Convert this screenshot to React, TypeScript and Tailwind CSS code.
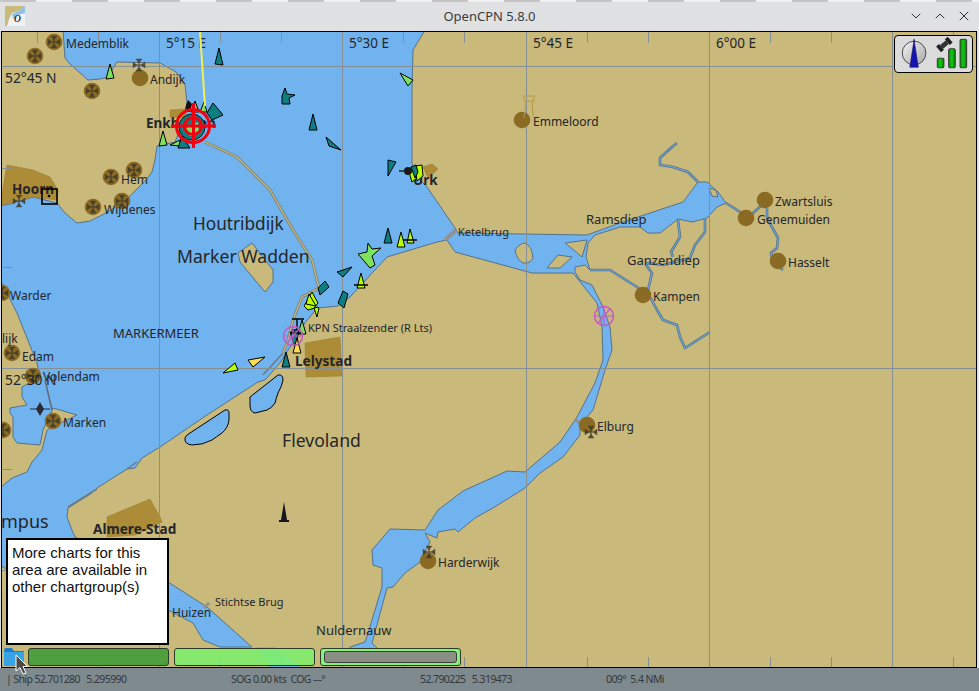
import React from 'react';
import { ChevronDown, ChevronUp, X } from 'lucide-react';

const WATER = '#70b3ef';
const LAND = '#c9b97b';
const COAST = '#56728a';
const TOWN = '#ad8c37';
const DOT = '#8b6a23';

// main water outline, walked round from the top left of the chart
const waterOutline =
  '63,30 65,58 70,64 88,80 100,79 108,77 112,70 117,62 160,63 176,72 185,84 187,103 185,112 180,130 175,142 157,146 155,160 152,172 146,180 128,198 108,212 90,221 77,223 65,213 57,203 33,197 10,204 0,206 ' +
  '0,279 2,283 17,313 37,363 40,377 22,387 22,397 27,405 10,408 10,413 13,417 13,437 17,443 40,445 43,430 53,408 77,415 47,430 42,450 32,462 27,472 12,478 0,488 ' +
  '0,565 40,590 168,610 193,623 203,640 220,647 252,647 207,607 168,582 75,537 72,530 67,517 68,508 92,493 97,488 127,469 135,468 142,458 160,447 207,415 258,382 265,380 280,363 305,323 317,308 338,306 350,297 387,257 437,242 447,240 455,252 532,273 573,273 ' +
  '597,303 602,327 603,360 595,383 577,417 573,423 560,442 525,472 507,471 463,491 438,510 425,530 390,529 372,550 373,565 382,568 382,587 368,633 365,642 350,647 350,649 378,649 372,643 387,588 393,587 405,573 420,562 430,542 425,533 437,538 438,532 455,529 458,532 475,518 493,508 525,488 540,473 563,457 580,435 580,425 593,410 605,370 612,350 610,327 603,307 592,285 580,280 575,272 ' +
  '575,267 585,265 590,270 586,257 588,243 595,235 620,227 640,227 648,233 660,233 678,219 692,222 707,218 717,207 726,203 718,192 707,182 698,182 683,202 620,223 587,235 458,233 455,228 427,187 418,178 412,163 412,90 413,50 425,30';

const islands = [
  '547,268 558,255 572,257 560,268',
  '565,243 587,240 582,257 575,251',
  '238,253 252,243 273,270 273,282 265,292 240,262',
  '709,188 716,190 718,197 712,196',
];

const lakes = [
  'M185 438Q186 435 190 433L225 410Q229 409 229 413L229 420Q228 428 222 433Q216 437 212 440Q203 445 192 445Q184 444 185 438Z',
  'M250 397L278 375Q283 374 283 380Q282 386 278 393Q276 399 275 403Q272 408 267 410L255 413Q250 412 250 405Z',
];

const towns = [
  '0,205 7,165 33,170 50,177 58,190 57,200 33,197 10,203',
  '305,343 340,337 342,376 306,377',
  '107,517 150,499 160,517 162,522 135,535 107,537',
  '170,110 187,109 185,118 170,117',
  '423,167 432,164 438,169 428,178',
];

const streams = [
  '677,143 672,147 660,158 660,165 673,167 688,172 698,182',
  '726,203 737,210 747,217',
  '752,214 765,202',
  '767,208 767,218 778,238 777,248 771,253 773,263 783,270',
  '678,220 680,237 671,252 673,257',
  '705,218 705,232 695,245 690,258 663,265 648,263 646,265 652,273 648,290',
  '590,270 610,270 637,287 650,297 657,310 663,320 677,325 680,337 685,348 710,332',
];

const labels = [
  { t: 'Medemblik', x: 66, y: 48, s: 12 },
  { t: '5°15 E', x: 166, y: 48, s: 13.5 },
  { t: '5°30 E', x: 349, y: 48, s: 13.5 },
  { t: '5°45 E', x: 533, y: 48, s: 13.5 },
  { t: '6°00 E', x: 716, y: 48, s: 13.5 },
  { t: '52°45 N', x: 5, y: 83, s: 13.8 },
  { t: '52°30 N', x: 5, y: 385, s: 13.8 },
  { t: 'Andijk', x: 150, y: 84, s: 12 },
  { t: 'Emmeloord', x: 533, y: 126, s: 12 },
  { t: 'Enkhuizen', x: 146, y: 128, s: 13.5, b: true },
  { t: 'Urk', x: 413, y: 185, s: 13.5, b: true },
  { t: 'Hoorn', x: 12, y: 194, s: 13.5, b: true },
  { t: 'Hem', x: 121, y: 184, s: 12 },
  { t: 'Wijdenes', x: 104, y: 214, s: 12 },
  { t: 'Houtribdijk', x: 193, y: 230, s: 17.2 },
  { t: 'Marker Wadden', x: 177, y: 263, s: 17.6 },
  { t: 'Ketelbrug', x: 458, y: 236, s: 11 },
  { t: 'Ramsdiep', x: 586, y: 224, s: 13 },
  { t: 'Ganzendiep', x: 627, y: 265, s: 13 },
  { t: 'Zwartsluis', x: 775, y: 206, s: 12 },
  { t: 'Genemuiden', x: 757, y: 224, s: 12 },
  { t: 'Hasselt', x: 788, y: 267, s: 12 },
  { t: 'Kampen', x: 653, y: 301, s: 12 },
  { t: 'Warder', x: 10, y: 300, s: 12 },
  { t: 'lijk', x: 2, y: 343, s: 12 },
  { t: 'Edam', x: 22, y: 361, s: 12 },
  { t: 'Volendam', x: 43, y: 381, s: 12 },
  { t: 'Marken', x: 63, y: 427, s: 12 },
  { t: 'MARKERMEER', x: 113, y: 338, s: 13 },
  { t: 'KPN Straalzender (R Lts)', x: 308, y: 332, s: 11 },
  { t: 'Lelystad', x: 295, y: 366, s: 13.6, b: true },
  { t: 'Flevoland', x: 282, y: 447, s: 17.6 },
  { t: 'Elburg', x: 597, y: 431, s: 12 },
  { t: 'Harderwijk', x: 438, y: 567, s: 12 },
  { t: 'Nuldernauw', x: 316, y: 635, s: 13 },
  { t: 'Stichtse Brug', x: 215, y: 606, s: 11 },
  { t: 'Huizen', x: 172, y: 617, s: 12 },
  { t: 'Almere-Stad', x: 93, y: 534, s: 13.6, b: true },
  { t: 'mpus', x: 1, y: 528, s: 18 },
];

const churchTowns = [
  [54, 42], [35, 56], [92, 91], [111, 177], [134, 170], [122, 201], [93, 207], [2, 293], [12, 353], [33, 376], [53, 421], [3, 430],
];
const plainTowns = [
  [140, 78], [522, 120], [765, 200], [746, 218], [778, 261], [643, 295], [587, 425], [428, 561],
];
const looseCrosses = [
  [19, 201], [139, 65], [591, 432], [429, 552],
];

const TEAL = '#0d7f82';
const GREEN = '#7de35f';
const LIME = '#b8ff00';
const YELLOW = '#ffdc55';

const ships = [
  { p: '219,48 215,64 223,65', f: TEAL },
  { p: '285,88 287,94 295,95 289,98 290,104 282,104 282,96', f: TEAL },
  { p: '313,114 309,130 317,130', f: TEAL },
  { p: '326,137 341,150 329,146', f: TEAL },
  { p: '388,160 396,162 388,176', f: TEAL },
  { p: '400,73 413,80 408,86', f: GREEN },
  { p: '110,64 106,79 114,78', f: GREEN },
  { p: '163,131 159,146 167,145', f: GREEN },
  { p: '388,228 384,243 392,243', f: TEAL },
  { p: '401,232 397,247 405,247', f: LIME },
  { p: '410,229 407,243 414,243', f: LIME },
  { p: '368,243 372,249 381,248 372,256 375,265 370,268 358,254 367,252', f: GREEN },
  { p: '361,273 357,288 365,288', f: LIME },
  { p: '337,272 352,267 343,277', f: TEAL },
  { p: '325,281 329,287 320,295 318,288', f: TEAL },
  { p: '343,291 348,294 344,308 338,303', f: TEAL },
  { p: '312,292 304,306 308,310 318,307 319,308 317,317 314,308 318,303', f: LIME },
  { p: '309,294 306,304 316,306', f: LIME },
  { p: '302,320 298,334 306,334', f: GREEN },
  { p: '290,332 299,332 295,347', f: TEAL },
  { p: '297,338 293,353 301,353', f: YELLOW },
  { p: '286,352 282,367 290,367', f: TEAL },
  { p: '248,360 265,357 253,367', f: YELLOW },
  { p: '223,373 235,363 238,370', f: LIME },
  { p: '207,113 213,103 223,115 212,120', f: TEAL },
  { p: '204,102 200,112 207,112', f: GREEN },
  { p: '195,101 191,112 199,112', f: GREEN },
  { p: '170,145 180,140 180,146', f: GREEN },
  { p: '182,136 178,148 190,148', f: TEAL },
  { p: '408,169 412,182 418,177 414,167', f: LIME },
  { p: '415,166 417,181 423,176 422,165', f: LIME },
  { p: '411,167 415,178 418,172 416,165', f: TEAL },
];

const Church = ({ x, y }: { x: number; y: number }) => (
  <g transform={`translate(${x} ${y})`} stroke="#3d3a2c" fill="#3d3a2c" opacity="0.85">
    <path d="M-6 0H6M0 -6V6" strokeWidth="1.2" />
    <path d="M-6 -3V3L-2 0ZM6 -3V3L2 0ZM-3 -6H3L0 -2ZM-3 6H3L0 2Z" strokeWidth="0.4" />
  </g>
);

const ChartMap = () => (
  <svg viewBox="2 32 974 635" width="974" height="635" className="block">
    <rect x="2" y="32" width="974" height="635" fill={LAND} />

    {/* water and shoreline */}
    <polygon points={waterOutline} fill={WATER} stroke={COAST} strokeWidth="1" />
    <polygon points="256,647 275,647 300,667 270,667" fill={WATER} />
    {islands.map((p) => (
      <polygon key={p} points={p} fill={LAND} stroke={COAST} strokeWidth="1" strokeLinejoin="round" />
    ))}
    <path d="M515 250Q520 243 525 243Q532 246 533 258Q530 264 523 263Q517 260 515 250Z" fill={LAND} stroke={COAST} strokeWidth="1" />
    {lakes.map((d) => (
      <path key={d} d={d} fill={WATER} stroke="#000" strokeWidth="1" strokeLinejoin="round" />
    ))}
    {streams.map((p) => (
      <g key={p} fill="none" strokeLinejoin="round">
        <polyline points={p} stroke={COAST} strokeWidth="2.6" />
        <polyline points={p} stroke={WATER} strokeWidth="0.9" />
      </g>
    ))}
    {towns.map((p) => (
      <polygon key={p} points={p} fill={TOWN} stroke="#9a8035" strokeWidth="0.6" />
    ))}

    {/* dikes and bridges */}
    <g fill="none" strokeLinejoin="round">
      <polyline points="205,142 237,157 270,190 293,230 312,260 319,288 302,297 293,320 288,340 283,353" stroke="#7d8378" strokeWidth="3" />
      <polyline points="205,142 237,157 270,190 293,230 312,260 319,288 302,297 293,320 288,340 283,353" stroke={LAND} strokeWidth="1.2" />
      <polyline points="283,353 263,375" stroke="#6d7a84" strokeWidth="1.5" />
      <polyline points="45,380 52,410" stroke="#5f6b74" strokeWidth="1.5" />
      <polyline points="68,507 97,489" stroke="#6d7a84" strokeWidth="1.5" />
      <polyline points="127,469 137,462" stroke="#6d7a84" strokeWidth="1.5" />
      <polyline points="445,240 456,230" stroke="#929292" strokeWidth="4" />
      <polyline points="204,608 209,603" stroke="#929292" strokeWidth="3" />
      <polyline points="575,419 579,423" stroke="#929292" strokeWidth="3" />
    </g>

    {/* grid */}
    <g stroke="#868f93" strokeWidth="1">
      {[159, 342, 526, 709, 892].map((x) => (
        <line key={x} x1={x + 0.5} y1="32" x2={x + 0.5} y2="667" />
      ))}
      {[66, 368].map((y) => (
        <line key={y} x1="2" y1={y + 0.5} x2="976" y2={y + 0.5} />
      ))}
      {[37, 98, 220, 281, 403, 464, 587, 648, 770, 831, 953].map((x) => (
        <g key={x}>
          <line x1={x + 0.5} y1="32" x2={x + 0.5} y2="43" />
          <line x1={x + 0.5} y1="657" x2={x + 0.5} y2="667" />
        </g>
      ))}
      {[168, 267, 469, 570].map((y) => (
        <line key={y} x1="2" y1={y + 0.5} x2="12" y2={y + 0.5} />
      ))}
    </g>

    {/* places */}
    {plainTowns.map(([x, y]) => (
      <circle key={`${x}-${y}`} cx={x} cy={y} r="8.3" fill={DOT} />
    ))}
    {churchTowns.map(([x, y]) => (
      <g key={`${x}-${y}`}>
        <circle cx={x} cy={y} r="8.3" fill={DOT} />
        <Church x={x} y={y} />
      </g>
    ))}
    {looseCrosses.map(([x, y]) => (
      <Church key={`${x}-${y}`} x={x} y={y} />
    ))}

    {/* Emmeloord water tower */}
    <g fill="none" stroke="#b89a45" strokeWidth="1">
      <rect x="524" y="96" width="10" height="5" />
      <path d="M526 101L524 118M532 101L533 117" />
    </g>

    <g className="font-['Noto_Sans',sans-serif]" fill="#24262a">
      {labels.map((l) => (
        <text key={l.t} x={l.x} y={l.y} fontSize={l.s} fontWeight={l.b ? 700 : 400}>
          {l.t}
        </text>
      ))}
    </g>

    {/* Hoorn marker, buoy, beacon, radio mast */}
    <rect x="42" y="189" width="15" height="15" fill="none" stroke="#000" strokeWidth="1.6" />
    <circle cx="49" cy="196" r="1.3" fill="#000" />
    <path d="M40 402L44 409L40 416L36 409Z" fill="#2b2b33" />
    <path d="M30 409H50" stroke="#2b2b33" strokeWidth="1" />
    <path d="M284 502L287 520H289V522H279V520H281Z" fill="#16161c" />
    <path d="M292 319H304M292 330H304M297 319V330" stroke="#000" strokeWidth="1.4" />

    {/* AIS targets */}
    <circle cx="192" cy="127" r="13" fill={TEAL} stroke="#000" strokeWidth="0.8" />
    <path d="M186 128L198 122L199 134L190 136Z" fill={GREEN} />
    {ships.map((s) => (
      <polygon key={s.p} points={s.p} fill={s.f} stroke="#000" strokeWidth="1" strokeLinejoin="round" />
    ))}
    <path d="M403 240H417M354 285H368M290 333H301" stroke="#000" strokeWidth="1.6" />
    <path d="M399 171H411" stroke="#1a1a1a" strokeWidth="1.4" />
    <circle cx="408" cy="171" r="4" fill="#1a1a1a" />
    <path d="M186 105L188 100L192 104L190 112L185 112Z" fill="#111" />

    {/* light sectors */}
    {[[293, 336], [604, 316]].map(([x, y]) => (
      <g key={x} fill="none" stroke="#c65ac9" strokeWidth="1.2">
        <circle cx={x} cy={y} r="9.5" strokeWidth="1.6" />
        <path d={`M${x - 9} ${y}H${x + 9}M${x} ${y - 9}V${y + 9}M${x - 6} ${y + 7}L${x + 6} ${y - 7}`} />
      </g>
    ))}

    {/* own ship */}
    <line x1="200" y1="32" x2="205" y2="106" stroke="#f3ef52" strokeWidth="2" />
    <g fill="none" stroke="#f5000f" strokeWidth="3">
      <circle cx="193" cy="126" r="16.5" />
      <circle cx="193" cy="126" r="8.5" />
      <path d="M171 126H216M193.500 103V148" />
    </g>
  </svg>
);

const StatusWidget = () => (
  <div className="absolute left-[892px] top-[3px] w-[79px] h-[38px] rounded-[4px] border border-black bg-[#dcdcdc]">
    <svg viewBox="0 0 79 38" width="77" height="36" className="block">
      <defs>
        <linearGradient id="dial" x1="0" y1="0" x2="1" y2="1">
          <stop offset="0" stopColor="#f2f2f2" />
          <stop offset="1" stopColor="#a8a8a8" />
        </linearGradient>
        <linearGradient id="bar" x1="0" y1="0" x2="1" y2="0">
          <stop offset="0" stopColor="#078f07" />
          <stop offset="0.5" stopColor="#12c812" />
          <stop offset="1" stopColor="#067a06" />
        </linearGradient>
      </defs>
      <circle cx="19" cy="18" r="12.5" fill="url(#dial)" stroke="#444" strokeWidth="1" />
      <path d="M19 3V6" stroke="#333" strokeWidth="1" />
      <path d="M19 4L23.500 33H14.500Z" fill="#1414b4" stroke="#101060" strokeWidth="0.6" />
      <g transform="rotate(-40 51 9)">
        <rect x="47" y="6.500" width="8" height="5" rx="1" fill="#333" />
        <rect x="43" y="5" width="4" height="8" fill="#222" />
        <rect x="55" y="5" width="4" height="8" fill="#222" />
      </g>
      <rect x="43.500" y="23.500" width="7" height="10" rx="1" fill="url(#bar)" stroke="#333" />
      <rect x="55.500" y="13.500" width="7" height="20" rx="1" fill="url(#bar)" stroke="#333" />
      <rect x="67.500" y="3.500" width="7" height="30" rx="1" fill="url(#bar)" stroke="#333" />
    </svg>
  </div>
);

const App: React.FC = () => {
  return (
    <div className="relative flex h-[691px] w-[979px] flex-col overflow-hidden bg-[#e2e3e5] font-['Noto_Sans',sans-serif]">
      {/* title bar */}
      <div className="h-[2px] bg-[repeating-linear-gradient(90deg,#c4c4c4_0_36px,#f1f1f1_36px_72px)]" />
      <div className="relative flex h-[29px] items-center justify-center rounded-t-[7px] bg-[#e0e1e3]">
        <svg viewBox="0 0 20 20" width="20" height="20" className="absolute left-[5px] top-[4px]">
          <rect width="20" height="20" fill="#eef2f5" />
          <polygon points="0,0 20,0 14,5 7,7 4,13 2,20 0,20" fill="#c9b97b" />
          <polygon points="20,0 20,7 13,9 8,13 7,8 14,5" fill="#8fbfe8" />
          <text x="9" y="16" fontSize="14" fontStyle="italic" fontFamily="Liberation Serif, serif" fill="#111">
            o
          </text>
        </svg>
        <span className="text-[13px] text-[#3a3d40]">OpenCPN 5.8.0</span>
        <div className="absolute right-[7px] top-[6px] flex gap-[8px] text-[#2e3134]">
          <ChevronDown size={16} strokeWidth={1.5} />
          <ChevronUp size={16} strokeWidth={1.5} />
          <X size={16} strokeWidth={1.5} />
        </div>
      </div>

      {/* chart canvas */}
      <div className="relative ml-px mr-[2px] h-[637px] border border-black">
        <ChartMap />
        <StatusWidget />

        <div className="absolute left-[4px] top-[506px] h-[107px] w-[163px] border-[2px] border-black bg-white px-[4px] py-[4px] font-['Liberation_Sans',sans-serif] text-[15px] leading-[17px] text-[#111]">
          More charts for this
          <br />
          area are available in
          <br />
          other chartgroup(s)
        </div>

        <div className="absolute left-[2px] top-[616px] flex items-start">
          <svg viewBox="0 0 20 18" width="20" height="18" className="mr-[4px]">
            <path d="M0 2Q0 0 2 0H8L10 3H20V18H0Z" fill="#1e7fc8" />
            <rect y="4" width="20" height="14" fill="#3aa3e6" />
          </svg>
          <div className="mr-[5px] h-[18px] w-[141px] rounded-[3px] border border-[#2c3a28] bg-[#4e9f3e]" />
          <div className="mr-[5px] h-[18px] w-[141px] rounded-[3px] border border-[#2c3a28] bg-[#7eee6c]/90" />
          <div className="flex h-[18px] w-[141px] items-center justify-center rounded-[3px] border border-[#2c3a28] bg-[#86f07a]">
            <div className="h-[12px] w-[133px] rounded-[3px] border border-[#3a3f3a] bg-[#8a8f86]" />
          </div>
        </div>
      </div>

      {/* status bar */}
      <div className="flex h-[23px] items-center bg-[#7f8a8f] pl-[6px] text-[10.500px] tracking-[-0.6px] text-[#33383b] whitespace-pre">
        <span className="w-[225px]">| Ship 52.701280   5.295990</span>
        <span className="w-[189px]">SOG 0.00 kts  COG ---°</span>
        <span className="w-[186px]">52.790225   5.319473</span>
        <span>009°  5.4 NMi</span>
      </div>

      {/* pointer */}
      <svg viewBox="0 0 13 22" width="13" height="22" className="absolute left-[15px] top-[654px]">
        <path d="M1 1V17L5 13.500L8 20L11 19L8 12.500H12.500Z" fill="#4a4a4a" stroke="#fff" strokeWidth="1" />
      </svg>
    </div>
  );
};

export default App;
